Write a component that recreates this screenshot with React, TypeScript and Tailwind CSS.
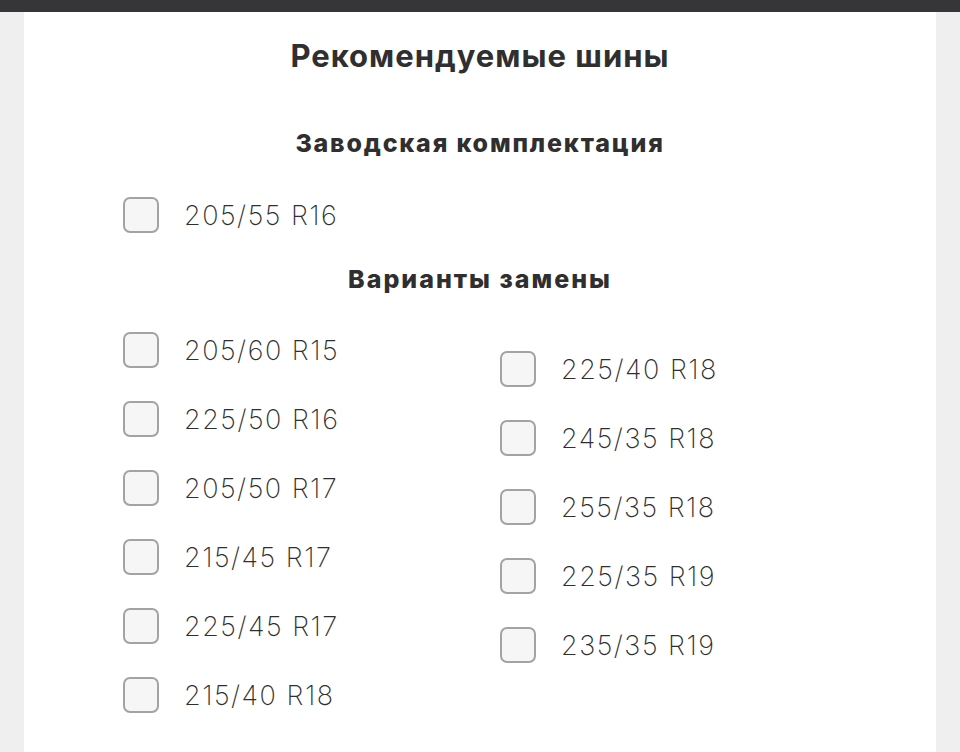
import React from "react";

const left = ["205/60 R15", "225/50 R16", "205/50 R17", "215/45 R17", "225/45 R17", "215/40 R18"];
const right = ["225/40 R18", "245/35 R18", "255/35 R18", "225/35 R19", "235/35 R19"];

function Item({ label }: { label: string }) {
  return (
    <label className="flex items-center h-[36px] cursor-pointer">
      <span className="w-[36px] h-[36px] rounded-[7px] border-[2.5px] border-[#a3a3a3] bg-[#f6f6f6] shrink-0" />
      <span className="ml-[25px] text-[27px] font-[250] text-[#2f2f2f] leading-none tracking-[1.5px]">{label}</span>
    </label>
  );
}

export default function App() {
  return (
    <div className="min-h-[752px] bg-[#efefef]" style={{ fontFamily: "Inter, 'Noto Sans', sans-serif" }}>
      <div className="h-[12px] bg-[#363638]" />
      <div className="mx-[24px] bg-white min-h-[740px] flex flex-col">
        <h1 className="mt-[24px] h-[40px] leading-[40px] text-center text-[31px] font-bold text-[#2f2f2f] tracking-[1px]">
          Рекомендуемые шины
        </h1>
        <h2 className="mt-[51px] h-[32px] leading-[32px] text-center text-[25px] font-extrabold text-[#2f2f2f] tracking-[1.8px]">
          Заводская комплектация
        </h2>
        <div className="mt-[38px] pl-[99px]">
          <Item label="205/55 R16" />
        </div>
        <h2 className="mt-[30px] h-[32px] leading-[32px] text-center text-[25px] font-extrabold text-[#2f2f2f] tracking-[2px]">
          Варианты замены
        </h2>
        <div className="mt-[37px] pl-[99px] grid grid-cols-[377px_377px]">
          <div className="flex flex-col gap-[33px]">
            {left.map((l) => (
              <Item key={l} label={l} />
            ))}
          </div>
          <div className="flex flex-col gap-[33px] mt-[19px]">
            {right.map((l) => (
              <Item key={l} label={l} />
            ))}
          </div>
        </div>
      </div>
    </div>
  );
}
